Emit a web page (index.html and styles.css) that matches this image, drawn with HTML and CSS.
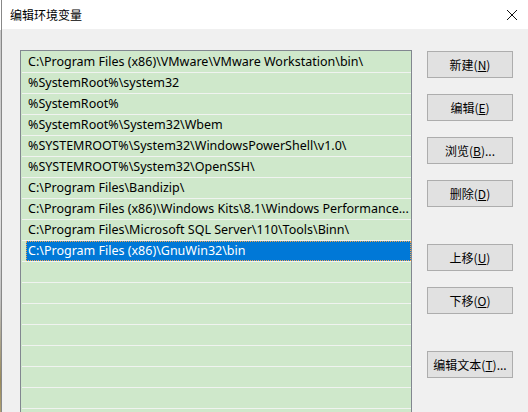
FILE: index.html
```html
<!DOCTYPE html>
<html lang="zh-CN">
<head>
<meta charset="utf-8">
<title>编辑环境变量</title>
<link rel="stylesheet" href="styles.css">
</head>
<body>
<div class="screen">
  <div class="behind"></div>
  <div class="dialog">
    <div class="titlebar">
      <span class="title">编辑环境变量</span>
      <svg class="close" width="12" height="12" viewBox="0 0 12 12" aria-hidden="true">
        <path d="M1 1 L11 11 M11 1 L1 11" stroke="#111" stroke-width="1" fill="none"/>
      </svg>
    </div>
    <div class="content">
      <div class="list">
        <div class="row"><span class="label">C:\Program Files (x86)\VMware\VMware Workstation\bin\</span></div>
        <div class="row"><span class="label">%SystemRoot%\system32</span></div>
        <div class="row"><span class="label">%SystemRoot%</span></div>
        <div class="row"><span class="label">%SystemRoot%\System32\Wbem</span></div>
        <div class="row"><span class="label">%SYSTEMROOT%\System32\WindowsPowerShell\v1.0\</span></div>
        <div class="row"><span class="label">%SYSTEMROOT%\System32\OpenSSH\</span></div>
        <div class="row"><span class="label">C:\Program Files\Bandizip\</span></div>
        <div class="row"><span class="label">C:\Program Files (x86)\Windows Kits\8.1\Windows Performance...</span></div>
        <div class="row"><span class="label">C:\Program Files\Microsoft SQL Server\110\Tools\Binn\</span></div>
        <div class="row selected"><span class="label">C:\Program Files (x86)\GnuWin32\bin</span></div>
        <div class="row"><span class="label"></span></div>
        <div class="row"><span class="label"></span></div>
        <div class="row"><span class="label"></span></div>
        <div class="row"><span class="label"></span></div>
        <div class="row"><span class="label"></span></div>
        <div class="row"><span class="label"></span></div>
        <div class="row"><span class="label"></span></div>
        <div class="row"><span class="label"></span></div>
      </div>
      <div class="buttons">
        <div class="group">
          <button class="btn">新建(<u>N</u>)</button>
          <button class="btn">编辑(<u>E</u>)</button>
          <button class="btn">浏览(<u>B</u>)...</button>
          <button class="btn">删除(<u>D</u>)</button>
        </div>
        <div class="group">
          <button class="btn">上移(<u>U</u>)</button>
          <button class="btn">下移(<u>O</u>)</button>
        </div>
        <div class="group">
          <button class="btn">编辑文本(<u>T</u>)...</button>
        </div>
      </div>
    </div>
  </div>
</div>
</body>
</html>
```
FILE: styles.css
```css
html, body {
  margin: 0;
  padding: 0;
  width: 528px;
  height: 412px;
  overflow: hidden;
  background: #f0f0f0;
}

.screen {
  display: flex;
  width: 528px;
  height: 412px;
  overflow: hidden;
  font-family: "Noto Sans", "Noto Sans CJK SC", sans-serif;
  font-size: 12px;
  color: #000;
}

.behind {
  width: 1px;
  flex: none;
  background: linear-gradient(to bottom, #ffffff 0, #ffffff 30px, #c8c8c8 30px, #d0d0d0 200px, #e8e8e8 200px, #c0c0c0 300px, #9a8a5a 380px, #b0a070 412px);
}

.dialog {
  flex: 1;
  display: flex;
  flex-direction: column;
  border-left: 1px solid #888888;
  background: #f0f0f0;
  min-width: 0;
}

.titlebar {
  height: 29px;
  flex: none;
  background: #ffffff;
  display: flex;
  align-items: center;
  justify-content: space-between;
  padding: 0 10px 0 8px;
}

.title {
  font-family: "Noto Sans CJK SC", sans-serif;
  font-size: 12px;
  line-height: 14px;
  padding-top: 1px;
}

.close {
  display: block;
  margin-top: 1px;
}

.content {
  display: flex;
  padding: 21px 0 0 18px;
  gap: 15px;
  align-items: flex-start;
}

.list {
  width: 392px;
  height: 400px;
  flex: none;
  box-sizing: border-box;
  border: 1px solid #828790;
  background: #cfe8cb;
  padding-top: 1px;
  overflow: hidden;
}

.row {
  display: flex;
  height: 20px;
  margin-left: 1px;
  border-bottom: 1px solid #f0f3f0;
}

.label {
  flex: 1;
  min-width: 0;
  margin-left: 4px;
  padding-left: 2px;
  box-sizing: border-box;
  font-size: 12.5px;
  line-height: 20px;
  white-space: nowrap;
  overflow: hidden;
}

.row.selected .label {
  background: #0078d7;
  color: #ffffff;
  outline: 1px dotted #f5a64a;
  outline-offset: -1px;
}

.buttons {
  display: flex;
  flex-direction: column;
  gap: 37px;
  margin-top: 1px;
}

.group {
  display: flex;
  flex-direction: column;
  gap: 16px;
}

.btn {
  width: 86px;
  height: 27px;
  box-sizing: border-box;
  border: 1px solid #adadad;
  background: #e1e1e1;
  font-family: "Noto Sans CJK SC", sans-serif;
  font-size: 12px;
  color: #000;
  padding: 0;
  margin: 0;
  line-height: 25px;
  text-align: center;
}

.btn u {
  text-decoration: underline;
  text-underline-offset: 1px;
}
```
